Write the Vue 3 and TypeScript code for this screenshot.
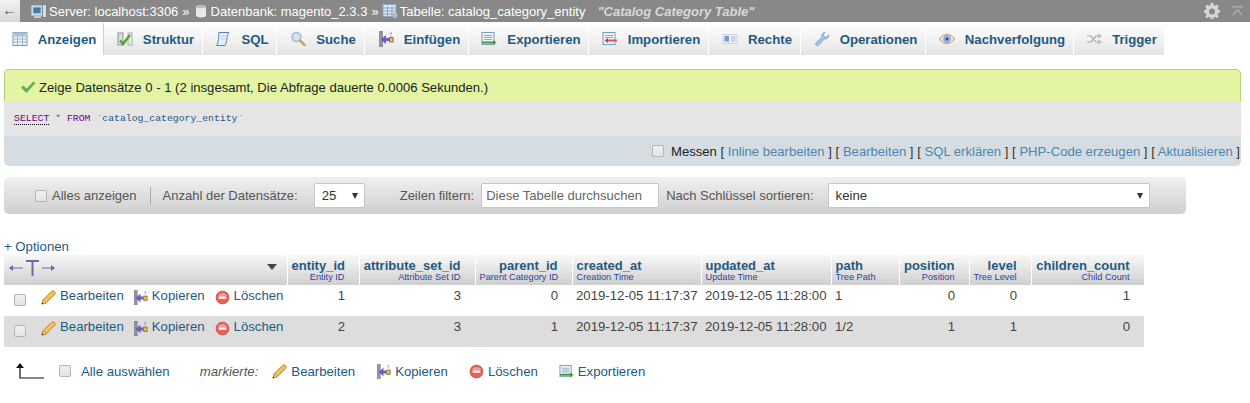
<template>
  <div class="page">
    <svg class="sprite" width="0" height="0" aria-hidden="true">
      <defs>
        <symbol id="i-table" viewBox="0 0 16 16">
          <rect x="1" y="1.5" width="14" height="13" fill="#eef3f8" stroke="#7d9ab8" />
          <path d="M1 5h14M1 8h14M1 11h14M5.500 2v12M10.500 2v12" stroke="#9fb6cc" fill="none" />
          <rect x="1" y="1.5" width="14" height="3" fill="#a9c0d6" />
        </symbol>
        <symbol id="i-struct" viewBox="0 0 16 16">
          <rect x="1" y="2" width="5" height="12" fill="#d9dde2" stroke="#8c97a3" />
          <rect x="11" y="2" width="4" height="12" fill="#e8ebee" stroke="#a2adb8" />
          <path d="M3 9.500l3 3.500 7-9" stroke="#57a032" stroke-width="2.400" fill="none" />
        </symbol>
        <symbol id="i-sql" viewBox="0 0 16 16">
          <path d="M4 1.500h10c-1 1-1.500 3-2 6s-1 5.500-2 7H1.500c1-1 1.500-3 2-6s0-5 .5-7z" fill="#e1edf7" stroke="#5d83aa" />
          <path d="M6 5h5M5.500 8h5" stroke="#b9cde0" fill="none" />
        </symbol>
        <symbol id="i-search" viewBox="0 0 16 16">
          <circle cx="6.500" cy="6" r="4.500" fill="#cfe3f4" stroke="#a6b8c6" stroke-width="1.400" />
          <path d="M10 9.500l4.500 4.500" stroke="#c99a52" stroke-width="2.400" stroke-linecap="round" />
        </symbol>
        <symbol id="i-insert" viewBox="0 0 16 16">
          <path d="M1 1h4M1 15h4" stroke="#2f3338" fill="none" />
          <rect x="1" y="1.500" width="4" height="13" fill="#8f949a" />
          <path d="M2.500 8.500l5.500-4.500v3h3v3H8v3z" fill="#6a5fc4" />
          <rect x="11.500" y="6.500" width="3.500" height="4.500" fill="#f2c64e" stroke="#6d5a1c" stroke-width=".8" />
          <path d="M13 1.500v1.500M13 3.800v.8" stroke="#4a55b8" />
        </symbol>
        <symbol id="i-export" viewBox="0 0 16 16">
          <rect x="1" y="1.500" width="12" height="12" fill="#eef3f8" stroke="#7d9ab8" />
          <path d="M3 4.500h8M3 6.500h8M3 8.500h8" stroke="#8fa9c2" fill="none" />
          <path d="M1 11.500h12" stroke="#3e9a35" stroke-width="2" fill="none" />
          <path d="M12 9l3.500 2.500L12 14z" fill="#3e9a35" />
        </symbol>
        <symbol id="i-import" viewBox="0 0 16 16">
          <rect x="1" y="1.500" width="12" height="12" fill="#eef3f8" stroke="#7d9ab8" />
          <path d="M3 4.500h8M3 6.500h8" stroke="#8fa9c2" fill="none" />
          <path d="M5 9.500h10" stroke="#e2554e" stroke-width="2" fill="none" />
          <path d="M6 7L2.500 9.500 6 12z" fill="#d23c36" />
        </symbol>
        <symbol id="i-rights" viewBox="0 0 16 16">
          <rect x="1" y="3.500" width="14" height="9" fill="#eef1f5" stroke="#cdd3da" />
          <rect x="2.500" y="5" width="4.500" height="5.500" fill="#6f9bd3" />
          <path d="M9 6h4.500M9 8h4.500M9 10h4.500" stroke="#a9b2bc" fill="none" />
        </symbol>
        <symbol id="i-wrench" viewBox="0 0 16 16">
          <path d="M2.500 14.500c-1.200-.8-1.200-2-.3-2.900l5.600-5.600c-.5-2 .5-4.300 3.300-4.800l-1.800 2.600 1.100 2.100 2.300.2L14.800 3.500c.6 2.800-1.700 5-4.500 4.400l-5.500 6.200c-.7.800-1.500.9-2.300.4z" fill="#a3c2e4" stroke="#7a9cc4" stroke-width=".7" />
        </symbol>
        <symbol id="i-eye" viewBox="0 0 16 16">
          <path d="M.5 8C3 4.500 5.500 3.500 8 3.500S13 4.500 15.500 8C13 11.500 10.500 12.500 8 12.500S3 11.500 .5 8z" fill="#f4e3d6" stroke="#c58c66" />
          <circle cx="8" cy="8" r="3.800" fill="#8ea9e6" />
          <circle cx="8" cy="8" r="1.300" fill="#2c3f80" />
        </symbol>
        <symbol id="i-trigger" viewBox="0 0 16 16">
          <path d="M1 5h4l5 6h3M1 11h4l5-6h3" stroke="#a8a8a8" stroke-width="1.200" fill="none" />
          <path d="M12.500 3l3 2-3 2zM12.500 9l3 2-3 2z" fill="#dcdcdc" stroke="#9a9a9a" stroke-width=".6" />
        </symbol>
        <symbol id="i-server" viewBox="0 0 16 16">
          <rect x="1" y="3" width="10" height="9" fill="#a9c4dd" stroke="#e4edf5" />
          <rect x="2.500" y="4.500" width="7" height="5.500" fill="#3f79ad" />
          <rect x="11.500" y="1.500" width="4" height="13" fill="#d8dde2" stroke="#6c7075" stroke-width=".7" />
          <path d="M3 14h7" stroke="#dfe5ea" stroke-width="1.400" />
        </symbol>
        <symbol id="i-db" viewBox="0 0 16 16">
          <path d="M3 3.500v9c0 2.500 10 2.500 10 0v-9z" fill="#e8e8e8" />
          <ellipse cx="8" cy="3.500" rx="5" ry="1.800" fill="#bcbcbc" />
        </symbol>
        <symbol id="i-tbl" viewBox="0 0 16 16">
          <rect x="1" y="1.500" width="13" height="12" fill="#dfe9f3" stroke="#86a5c4" />
          <path d="M1 5h13M1 8h13M1 11h13M5.500 3v10M10 3v10" stroke="#86a5c4" fill="none" />
          <circle cx="13" cy="12.500" r="2.500" fill="#b9b9b9" />
        </symbol>
        <symbol id="i-pencil" viewBox="0 0 16 16">
          <path d="M1 15l1.300-4.700L11.500 1.200c.8-.7 1.700-.6 2.300 0l.9.9c.7.700.7 1.600 0 2.300L5.600 13.600z" fill="#f3c14f" stroke="#b27a22" stroke-width=".9" />
          <path d="M1 15l1.300-4.700 3.300 3.300z" fill="#efd9b4" stroke="#a9772e" stroke-width=".7" />
          <path d="M1 15l.5-1.900 1.400 1.400z" fill="#3b2d1c" />
        </symbol>
        <symbol id="i-delete" viewBox="0 0 16 16">
          <circle cx="8" cy="8" r="6.800" fill="#e8625a" stroke="#c9524a" />
          <path d="M3 6c2-3.500 8-3.500 10 0z" fill="#f2a49e" />
          <rect x="4" y="6.800" width="8" height="2.600" fill="#fff" />
        </symbol>
      </defs>
    </svg>

    <header class="topbar">
      <div class="back">←</div>
      <nav class="crumbs">
        <svg class="ic"><use href="#i-server" /></svg>
        <span>Server: localhost:3306</span>
        <span class="sep">»</span>
        <svg class="ic"><use href="#i-db" /></svg>
        <span>Datenbank: magento_2.3.3</span>
        <span class="sep">»</span>
        <svg class="ic"><use href="#i-tbl" /></svg>
        <span>Tabelle: catalog_category_entity</span>
        <em class="comment">"Catalog Category Table"</em>
      </nav>
      <svg class="gear" viewBox="0 0 16 16">
        <path d="M6.700 0h2.600l.4 2.200 1.400.6 1.900-1.300 1.800 1.800-1.300 1.900.6 1.400 2.200.4v2.600l-2.200.4-.6 1.400 1.300 1.900-1.800 1.800-1.900-1.300-1.400.6-.4 2.200H6.700l-.4-2.200-1.400-.6L3 15.300 1.200 13.500 2.500 11.600l-.6-1.400L-.3 9.800V7.200l2.200-.4.600-1.400L1.200 3.500 3 1.700l1.900 1.300 1.400-.6zM8 5.500a3 3 0 1 0 0 6 3 3 0 0 0 0-6z" fill="#d6d6d6" fill-rule="evenodd" />
      </svg>
      <svg class="collapse" viewBox="0 0 12 12">
        <path d="M0 1h12" stroke="#b5b5b5" stroke-width="1.400" />
        <path d="M1 10l5-6 5 6" stroke="#b5b5b5" stroke-width="1.400" fill="none" />
      </svg>
    </header>

    <nav class="tabs">
      <a
        v-for="tab in tabs"
        :key="tab.label"
        class="tab"
        :class="{ active: tab.active }"
        :style="{ width: tab.width + 'px' }"
      >
        <svg class="tab-ic"><use :href="'#' + tab.icon" /></svg>
        {{ tab.label }}
      </a>
    </nav>

    <section class="result">
      <div class="success">
        <svg class="check" viewBox="0 0 16 16">
          <path d="M1 8.500l2.500-2 3 3.200L13.500 2.500l2 1.500-9 10z" fill="#5fae5b" />
        </svg>
        Zeige Datensätze 0 - 1 (2 insgesamt, Die Abfrage dauerte 0.0006 Sekunden.)
      </div>
      <div class="sql"><span class="kw">SELECT</span> <span class="op">*</span> <span class="fr">FROM</span> <span class="tn">`catalog_category_entity`</span></div>
      <div class="tools">
        <span class="cb"></span>
        <span class="measure">Messen</span>
        <span v-for="link in links" :key="link" class="tool-link">[ <a>{{ link }}</a> ]</span>
      </div>
    </section>

    <div class="navbar">
      <span class="cb"></span>
      <span class="nav-all">Alles anzeigen</span>
      <span class="divider"></span>
      <span class="nav-count">Anzahl der Datensätze:</span>
      <div class="select small">25<i class="caret"></i></div>
      <span class="nav-filter">Zeilen filtern:</span>
      <input class="filter" placeholder="Diese Tabelle durchsuchen" />
      <span class="nav-sort">Nach Schlüssel sortieren:</span>
      <div class="select wide">keine<i class="caret"></i></div>
    </div>

    <a class="options">+ Optionen</a>

    <table class="data">
      <colgroup>
        <col :style="{ width: leadWidth + 'px' }" />
        <col v-for="c in columns" :key="c.name" :style="{ width: c.width + 'px' }" />
      </colgroup>
      <thead>
        <tr>
          <th class="lead">
            <div class="lead-in">
              <svg class="arrows" viewBox="0 0 46 16" width="46" height="16">
                <path d="M1 8h13M33 8h12" stroke="#6b6ba8" stroke-width="1.200" />
                <path d="M0 8l4-3v6zM46 8l-4-3v6z" fill="#6b6ba8" />
                <path d="M17 1h13M23.500 1v15" stroke="#6b6ba8" stroke-width="2" />
              </svg>
              <i class="down"></i>
            </div>
          </th>
          <th v-for="c in columns" :key="c.name" :class="{ left: c.left }">
            <div class="col-name">{{ c.name }}</div>
            <div class="col-note">{{ c.note }}</div>
          </th>
        </tr>
      </thead>
      <tbody>
        <tr v-for="row in rows" :key="row[0]">
          <td class="lead">
            <div class="actions">
              <span class="cb row-cb"></span>
              <a class="act edit"><svg class="ic-16"><use href="#i-pencil" /></svg>Bearbeiten</a>
              <a class="act copy"><svg class="ic-16"><use href="#i-insert" /></svg>Kopieren</a>
              <a class="act del"><svg class="ic-16"><use href="#i-delete" /></svg>Löschen</a>
            </div>
          </td>
          <td v-for="(val, i) in row" :key="i" :class="{ left: columns[i].left }">{{ val }}</td>
        </tr>
      </tbody>
    </table>

    <div class="bulk">
      <svg class="arrow-up" viewBox="0 0 28 16" width="28" height="16">
        <path d="M4 3v12h24" stroke="#111" fill="none" stroke-width="1.200" />
        <path d="M0 5l4-5 4 5z" fill="#111" />
      </svg>
      <span class="cb bulk-cb"></span>
      <a class="bulk-all">Alle auswählen</a>
      <em class="marked">markierte:</em>
      <a class="bulk-act"><svg class="ic-16"><use href="#i-pencil" /></svg>Bearbeiten</a>
      <a class="bulk-act"><svg class="ic-16"><use href="#i-insert" /></svg>Kopieren</a>
      <a class="bulk-act"><svg class="ic-16"><use href="#i-delete" /></svg>Löschen</a>
      <a class="bulk-act"><svg class="ic-16"><use href="#i-export" /></svg>Exportieren</a>
    </div>
  </div>
</template>

<script setup lang="ts">
interface Tab {
  label: string;
  icon: string;
  width: number;
  active?: boolean;
}

const tabs: Tab[] = [
  { label: 'Anzeigen', icon: 'i-table', width: 104, active: true },
  { label: 'Struktur', icon: 'i-struct', width: 99 },
  { label: 'SQL', icon: 'i-sql', width: 74 },
  { label: 'Suche', icon: 'i-search', width: 88 },
  { label: 'Einfügen', icon: 'i-insert', width: 104 },
  { label: 'Exportieren', icon: 'i-export', width: 120 },
  { label: 'Importieren', icon: 'i-import', width: 120 },
  { label: 'Rechte', icon: 'i-rights', width: 92 },
  { label: 'Operationen', icon: 'i-wrench', width: 125 },
  { label: 'Nachverfolgung', icon: 'i-eye', width: 148 },
  { label: 'Trigger', icon: 'i-trigger', width: 91 },
];

const links = ['Inline bearbeiten', 'Bearbeiten', 'SQL erklären', 'PHP-Code erzeugen', 'Aktualisieren'];

const leadWidth = 283;

const columns = [
  { name: 'entity_id', note: 'Entity ID', width: 72 },
  { name: 'attribute_set_id', note: 'Attribute Set ID', width: 116 },
  { name: 'parent_id', note: 'Parent Category ID', width: 97 },
  { name: 'created_at', note: 'Creation Time', width: 129, left: true },
  { name: 'updated_at', note: 'Update Time', width: 130, left: true },
  { name: 'path', note: 'Tree Path', width: 68, left: true },
  { name: 'position', note: 'Position', width: 70 },
  { name: 'level', note: 'Tree Level', width: 62 },
  { name: 'children_count', note: 'Child Count', width: 113 },
];

const rows = [
  ['1', '3', '0', '2019-12-05 11:17:37', '2019-12-05 11:28:00', '1', '0', '0', '1'],
  ['2', '3', '1', '2019-12-05 11:17:37', '2019-12-05 11:28:00', '1/2', '1', '1', '0'],
];
</script>

<style>
html,
body {
  margin: 0;
  background: #fff;
  overflow: hidden;
}
</style>

<style scoped>
.page {
  width: 1250px;
  height: 403px;
  overflow: hidden;
  font-family: "Liberation Sans", Arial, sans-serif;
  font-size: 13.2px;
  color: #444;
}

.sprite {
  position: absolute;
}

a {
  color: #235a81;
}

.topbar {
  display: flex;
  align-items: center;
  height: 22px;
  background: #888;
  color: #fff;
  font-size: 13px;
}

.back {
  width: 20px;
  height: 22px;
  background: linear-gradient(#f2f2f2, #d8d8d8);
  color: #555;
  font-size: 15px;
  line-height: 20px;
  padding-left: 2px;
  box-sizing: border-box;
}

.crumbs {
  display: flex;
  align-items: center;
  flex: 1;
  padding-left: 11px;
  gap: 2px;
  white-space: nowrap;
}

.ic {
  width: 16px;
  height: 16px;
}

.sep {
  margin: 0 1px 0 2px;
}

.comment {
  margin-left: 10px;
  color: #d8d8d8;
  font-weight: bold;
}

.gear {
  width: 16px;
  height: 16px;
  margin-right: 12px;
}

.collapse {
  width: 11px;
  height: 11px;
  margin-right: 7px;
}

.tabs {
  display: flex;
  height: 32px;
  margin-top: 1px;
}

.tab {
  display: flex;
  align-items: center;
  justify-content: center;
  gap: 10px;
  box-sizing: border-box;
  height: 32px;
  padding-left: 5px;
  border-right: 1px solid #fff;
  background: linear-gradient(#fff, #e4e4e4);
  font-size: 13.2px;
  font-weight: bold;
  color: #235a81;
}

.tab.active {
  background: #fff;
  border-right: 1px solid #d0d0d0;
}

.tab-ic {
  width: 16px;
  height: 16px;
  flex: none;
}

.result {
  margin: 14px 9px 0 4px;
  font-size: 13.1px;
}

.success {
  display: flex;
  align-items: center;
  gap: 3px;
  box-sizing: border-box;
  height: 32px;
  padding: 3px 0 0 15px;
  background: #e3f5a2;
  border: 1px solid #b5cf7c;
  border-bottom: none;
  border-radius: 5px 5px 0 0;
  color: #222;
}

.check {
  width: 16px;
  height: 16px;
}

.sql {
  box-sizing: border-box;
  height: 35px;
  padding: 12px 0 0 10px;
  background: #e5e5e5;
  font-family: "Liberation Mono", monospace;
  font-size: 9.800px;
}

.kw {
  color: #770088;
  border-bottom: 1px dotted #000;
}

.op {
  color: #666;
}

.fr {
  color: #770088;
}

.tn {
  color: #225588;
}

.tools {
  display: flex;
  align-items: center;
  justify-content: flex-end;
  box-sizing: border-box;
  height: 30px;
  padding-right: 1px;
  background: #d5dde3;
  border-radius: 0 0 5px 5px;
  color: #333;
}

.tool-link {
  margin-left: 3.700px;
}

.tools a {
  color: #4a86b4;
}

.measure {
  margin-left: 7px;
  color: #222;
}

.cb {
  display: inline-block;
  box-sizing: border-box;
  width: 12px;
  height: 12px;
  border: 1px solid #b5b5b5;
  border-radius: 2px;
  background: linear-gradient(#f1f1f1, #e3e3e3);
  flex: none;
}

.navbar {
  display: flex;
  align-items: center;
  box-sizing: border-box;
  width: 1182px;
  height: 37px;
  margin: 11px 0 0 4px;
  padding-left: 31px;
  background: linear-gradient(#f0f0f0, #cfcfcf);
  border-radius: 5px;
  color: #555;
  font-size: 13px;
}

.nav-all {
  margin-left: 5px;
}

.divider {
  width: 1px;
  height: 18px;
  margin: 0 12px 0 13px;
  background: #aaa;
}

.select {
  position: relative;
  box-sizing: border-box;
  height: 25px;
  line-height: 23px;
  border: 1px solid #c5c5c5;
  border-radius: 2px;
  background: #fff;
  color: #333;
  padding-left: 7px;
  font-size: 13.2px;
}

.select.small {
  width: 51px;
  margin-left: 16px;
}

.select.wide {
  width: 322px;
  margin-left: 14px;
}

.caret {
  position: absolute;
  right: 6px;
  top: 9px;
  border-left: 3.500px solid transparent;
  border-right: 3.500px solid transparent;
  border-top: 6px solid #333;
}

.nav-filter {
  margin-left: 35px;
}

.filter {
  box-sizing: border-box;
  width: 178px;
  height: 25px;
  margin-left: 7px;
  padding: 0 4px;
  border: 1px solid #c5c5c5;
  border-radius: 2px;
  font: 13px "Liberation Sans", Arial, sans-serif;
}

.filter::placeholder {
  color: #666;
}

.nav-sort {
  margin-left: 7px;
}

.options {
  display: block;
  margin: 25px 0 0 4px;
  height: 16px;
  line-height: 15px;
}

.data {
  table-layout: fixed;
  border-collapse: collapse;
  margin-left: 4px;
  width: 1140px;
}

th {
  height: 30px;
  padding: 2px 14px 0 4px;
  background: linear-gradient(#f8f8f8, #cfcfcf);
  border-right: 1px solid #fff;
  text-align: right;
  vertical-align: middle;
  box-sizing: border-box;
  font-weight: normal;
}

th.left,
td.left {
  text-align: left;
  padding-left: 4px;
}

th.lead {
  padding: 0;
}

.lead-in {
  display: flex;
  justify-content: space-between;
  padding: 0 10px 4px 5px;
}

.arrows {
  display: block;
}

.down {
  margin-top: 4px;
  border-left: 5px solid transparent;
  border-right: 5px solid transparent;
  border-top: 6px solid #444;
}

.col-name {
  font-size: 13px;
  font-weight: bold;
  color: #235a81;
  line-height: 13px;
  white-space: nowrap;
}

.col-note {
  font-size: 9.200px;
  line-height: 11px;
  color: #2f3f9a;
  white-space: nowrap;
}

tbody tr {
  height: 31px;
}

tbody tr:nth-child(even) {
  background: #ddd;
}

td {
  padding: 3px 14px 0 4px;
  vertical-align: top;
  text-align: right;
  color: #444;
  white-space: nowrap;
}

td.lead {
  padding: 0;
}

.actions {
  display: flex;
  align-items: flex-start;
  padding: 3px 0 0 10px;
}

.row-cb {
  margin: 6px 15px 0 0;
}

.act {
  display: inline-flex;
  align-items: flex-start;
  line-height: 15px;
}

.act .ic-16 {
  margin-top: 2px;
}

.ic-16 {
  width: 15px;
  height: 15px;
  flex: none;
  margin-right: 4px;
}

.copy {
  margin-left: 9px;
}

.del {
  margin-left: 10px;
}

.bulk {
  display: flex;
  align-items: center;
  margin: 14px 0 0 16px;
  height: 20px;
}

.bulk-cb {
  margin-left: 15px;
}

.bulk-all {
  margin-left: 10px;
}

.marked {
  margin-left: 30px;
  margin-right: -7px;
  color: #555;
}

.bulk-act {
  display: inline-flex;
  align-items: center;
  margin-left: 21px;
}
</style>
